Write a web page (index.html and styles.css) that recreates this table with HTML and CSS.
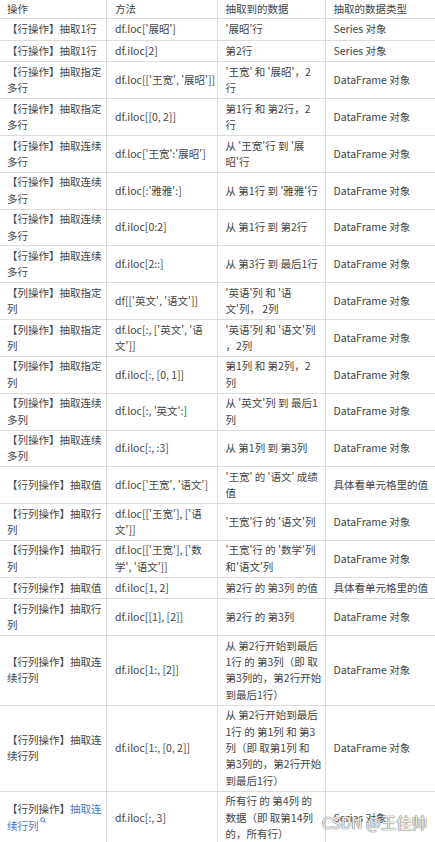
FILE: index.html
```html
<!DOCTYPE html>
<html lang="zh">
<head>
<meta charset="utf-8">
<title>pandas loc iloc</title>
<link rel="stylesheet" href="styles.css">
</head>
<body>
<div class="wrap">
<table class="tbl">
<colgroup><col class="c1"><col class="c2"><col class="c3"><col class="c4"></colgroup>
<thead>
<tr><th>操作</th><th>方法</th><th>抽取到的数据</th><th>抽取的数据类型</th></tr>
</thead>
<tbody>
<tr><td>【行操作】抽取1行</td><td>df.loc['展昭']</td><td>'展昭'行</td><td>Series 对象</td></tr>
<tr><td>【行操作】抽取1行</td><td>df.iloc[2]</td><td>第2行</td><td>Series 对象</td></tr>
<tr><td>【行操作】抽取指定<br>多行</td><td>df.loc[['王宽', '展昭']]</td><td>'王宽' 和 '展昭'，2<br>行</td><td>DataFrame 对象</td></tr>
<tr><td>【行操作】抽取指定<br>多行</td><td>df.iloc[[0, 2]]</td><td>第1行 和 第2行，2<br>行</td><td>DataFrame 对象</td></tr>
<tr><td>【行操作】抽取连续<br>多行</td><td>df.loc['王宽':'展昭']</td><td>从 '王宽'行 到 '展<br>昭'行</td><td>DataFrame 对象</td></tr>
<tr><td>【行操作】抽取连续<br>多行</td><td>df.loc[:'雅雅':]</td><td>从 第1行 到 '雅雅'行</td><td>DataFrame 对象</td></tr>
<tr><td>【行操作】抽取连续<br>多行</td><td>df.iloc[0:2]</td><td>从 第1行 到 第2行</td><td>DataFrame 对象</td></tr>
<tr><td>【行操作】抽取连续<br>多行</td><td>df.iloc[2::]</td><td>从 第3行 到 最后1行</td><td>DataFrame 对象</td></tr>
<tr><td>【列操作】抽取指定<br>列</td><td>df[['英文', '语文']]</td><td>'英语'列 和 '语<br>文'列， 2列</td><td>DataFrame 对象</td></tr>
<tr><td>【列操作】抽取指定<br>列</td><td>df.loc[:, ['英文', '语<br>文']]</td><td>'英语'列 和 '语文'列<br>，2列</td><td>DataFrame 对象</td></tr>
<tr><td>【列操作】抽取指定<br>列</td><td>df.iloc[:, [0, 1]]</td><td>第1列 和 第2列，2<br>列</td><td>DataFrame 对象</td></tr>
<tr><td>【列操作】抽取连续<br>多列</td><td>df.loc[:, '英文':]</td><td>从 '英文'列 到 最后1<br>列</td><td>DataFrame 对象</td></tr>
<tr><td>【列操作】抽取连续<br>多列</td><td>df.iloc[:, :3]</td><td>从 第1列 到 第3列</td><td>DataFrame 对象</td></tr>
<tr><td>【行列操作】抽取值</td><td>df.loc['王宽', '语文']</td><td>'王宽' 的 '语文' 成绩<br>值</td><td>具体看单元格里的值</td></tr>
<tr><td>【行列操作】抽取行<br>列</td><td>df.loc[['王宽'], ['语<br>文']]</td><td>'王宽'行 的 '语文'列</td><td>DataFrame 对象</td></tr>
<tr><td>【行列操作】抽取行<br>列</td><td>df.loc[['王宽'], ['数<br>学', '语文']]</td><td>'王宽'行 的 '数学'列<br>和'语文'列</td><td>DataFrame 对象</td></tr>
<tr class="single"><td>【行列操作】抽取值</td><td>df.iloc[1, 2]</td><td>第2行 的 第3列 的值</td><td>具体看单元格里的值</td></tr>
<tr><td>【行列操作】抽取行<br>列</td><td>df.iloc[[1], [2]]</td><td>第2行 的 第3列</td><td>DataFrame 对象</td></tr>
<tr><td>【行列操作】抽取连<br>续行列</td><td>df.iloc[1:, [2]]</td><td>从 第2行开始到最后<br>1行 的 第3列（即 取<br>第3列的，第2行开始<br>到最后1行）</td><td>DataFrame 对象</td></tr>
<tr><td>【行列操作】抽取连<br>续行列</td><td>df.iloc[1:, [0, 2]]</td><td>从 第2行开始到最后<br>1行 的 第1列 和 第3<br>列（即 取第1列 和<br>第3列的，第2行开始<br>到最后1行）</td><td>DataFrame 对象</td></tr>
<tr><td>【行列操作】<a class="kw" href="#">抽取连<br>续行列</a><svg class="srch" width="6" height="7" viewBox="0 0 6 7"><circle cx="2.6" cy="2.6" r="2" fill="none" stroke="#4a78c2" stroke-width="0.9"/><line x1="4" y1="4" x2="5.6" y2="5.8" stroke="#4a78c2" stroke-width="0.9"/></svg></td><td>df.iloc[:, 3]</td><td>所有行 的 第4列 的<br>数据（即 取第14列<br>的，所有行）</td><td>Series 对象</td></tr>
</tbody>
</table>
<div class="wm">CSDN @王佳帅</div>
</div>
</body>
</html>
```

FILE: styles.css
```css
html, body {
  margin: 0;
  padding: 0;
  background: #fff;
}
body {
  font-family: "Noto Sans CJK SC", "Noto Sans", sans-serif;
  font-size: 10.5px;
  color: #454545;
  overflow: hidden;
}
.wrap {
  position: relative;
  width: 435px;
  height: 842px;
  overflow: hidden;
}
.tbl {
  border-collapse: collapse;
  table-layout: fixed;
  width: 440px;
  margin: -2px 0 0 -2px;
}
.c1 { width: 108px; }
.c2 { width: 110.5px; }
.c3 { width: 108px; }
.c4 { width: 113.5px; }
.tbl th, .tbl td {
  border: 1px solid #dcdcdc;
  padding: 1.5px 8px;
  line-height: 16.4px;
  text-align: left;
  vertical-align: middle;
  font-weight: normal;
  white-space: nowrap;
}
.tbl tbody tr {
  height: 21.5px;
}
.tbl th {
  background: #fff;
}
.kw {
  color: #4a78c2;
  text-decoration: none;
}
.srch {
  vertical-align: 6px;
  margin-left: 1px;
}
.wm {
  position: absolute;
  left: 322px;
  top: 811px;
  font-family: "Noto Sans CJK SC", sans-serif;
  font-size: 15.5px;
  color: rgba(255, 255, 255, 0.9);
  text-shadow: 0 0 1px #777, 0 0 1px #777, 0 0 1px #888;
  white-space: nowrap;
}
```
